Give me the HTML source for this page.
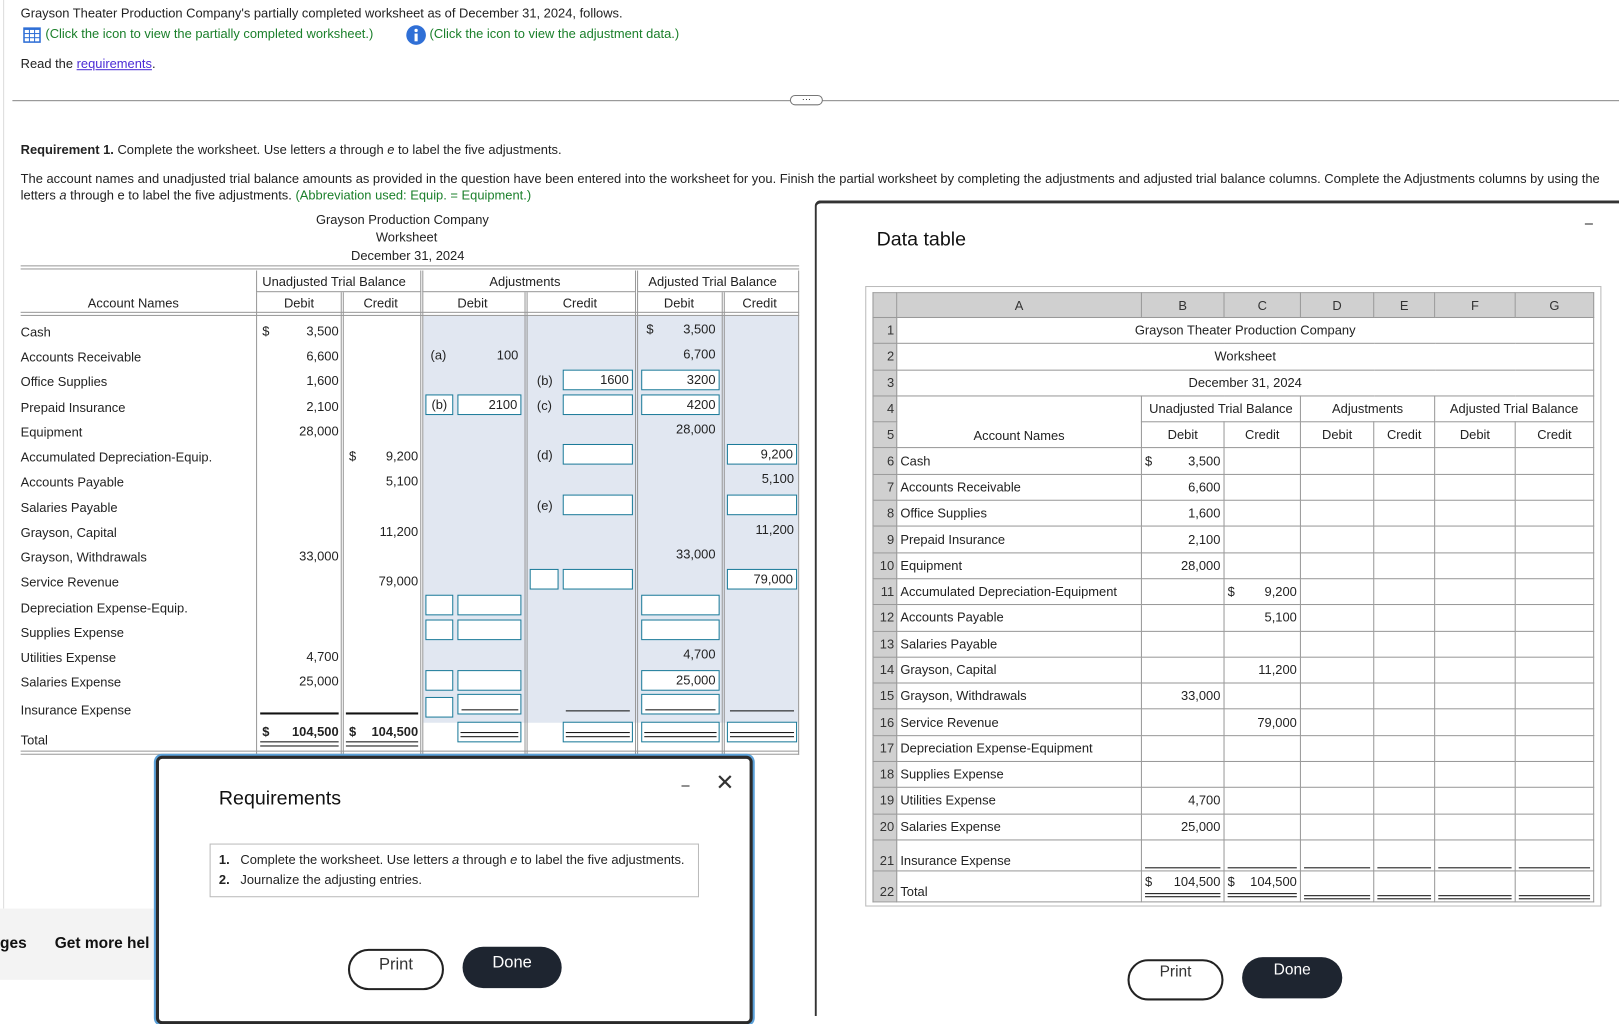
<!DOCTYPE html>
<html><head><meta charset="utf-8"><style>
*{margin:0;padding:0;box-sizing:border-box}
html,body{width:1619px;height:977px;overflow:hidden;background:#fff}
body{font-family:"Liberation Sans",Arial,sans-serif;color:#222;font-size:12.5px}
#w{position:absolute;left:0;top:0;width:1569px;height:947px;transform:scale(1.0325);transform-origin:0 0}
.t{position:absolute;white-space:nowrap;line-height:16px}
.n{position:absolute;white-space:nowrap;text-align:right;line-height:16px}
.b{position:absolute;border:1px solid #1b7a99;background:#fff;height:20px;text-align:right;padding-right:3px;line-height:18px;font-size:12.5px}
.col{position:absolute;top:283px;height:448px;border-left:1px solid #999;border-right:1px solid #999}
.grp{position:absolute;top:262px;height:21px;border-left:1px solid #999;border-right:1px solid #999;border-bottom:1px solid #999}
.sh{position:absolute;background:#e1e7f1}
.ul{position:absolute;height:2px;background:#111}
.dl{position:absolute;height:5px;border-top:1px solid #111;border-bottom:1px solid #111}
.hl{position:absolute;height:4px;border-top:1px solid #999;border-bottom:1px solid #999}
table.dt{position:absolute;left:845px;top:283px;border-collapse:collapse;font-size:12.5px}
.dt td{border:1px solid #999;height:25.3px;padding:0 3px;white-space:nowrap;line-height:14px}
.dt td.rn{background:#d0d0d0;text-align:right;padding:0 2px;width:23px;color:#333}
.dt tr.h td{background:#d0d0d0;text-align:center;height:24px;color:#333}
.c{text-align:center}.r{text-align:right}
.dt td.s{vertical-align:bottom;padding-bottom:2px}
</style></head><body><div id="w">

<div class="t" style="left:20px;top:5px">Grayson Theater Production Company's partially completed worksheet as of December 31, 2024, follows.</div>
<svg style="position:absolute;left:22px;top:26px" width="18" height="16" viewBox="0 0 18 16"><rect x="0.5" y="0.5" width="17" height="15" fill="#2f6fd6"/><g fill="#fff"><rect x="2" y="3" width="4" height="3"/><rect x="7" y="3" width="4" height="3"/><rect x="12" y="3" width="4" height="3"/><rect x="2" y="7" width="4" height="3"/><rect x="7" y="7" width="4" height="3"/><rect x="12" y="7" width="4" height="3"/><rect x="2" y="11" width="4" height="3"/><rect x="7" y="11" width="4" height="3"/><rect x="12" y="11" width="4" height="3"/></g></svg>
<div class="t" style="left:44px;top:25px;color:#1a7f2a">(Click the icon to view the partially completed worksheet.)</div>
<svg style="position:absolute;left:393px;top:24px" width="20" height="20" viewBox="0 0 20 20"><circle cx="10" cy="10" r="9.5" fill="#2f6fd6"/><circle cx="10" cy="5.5" r="1.6" fill="#fff"/><rect x="8.5" y="8.5" width="3" height="7.5" fill="#fff"/></svg>
<div class="t" style="left:416px;top:25px;color:#1a7f2a">(Click the icon to view the adjustment data.)</div>
<div class="t" style="left:20px;top:54px">Read the <span style="color:#4b2bd6;text-decoration:underline">requirements</span>.</div>
<div style="position:absolute;left:0;top:0;width:4px;height:880px;border-right:1px solid #ddd"></div>
<div style="position:absolute;left:12px;top:97px;width:1607px;height:1px;background:#888"></div>
<div style="position:absolute;left:765px;top:92px;width:32px;height:10px;border:1px solid #777;border-radius:5px;background:#fff;font-size:9px;line-height:6px;text-align:center">···</div>

<div class="t" style="left:20px;top:137px"><b>Requirement 1.</b> Complete the worksheet. Use letters <i>a</i> through <i>e</i> to label the five adjustments.</div>
<div class="t" style="left:20px;top:165px">The account names and unadjusted trial balance amounts as provided in the question have been entered into the worksheet for you. Finish the partial worksheet by completing the adjustments and adjusted trial balance columns. Complete the Adjustments columns by using the</div>
<div class="t" style="left:20px;top:181px">letters <i>a</i> through e to label the five adjustments. <span style="color:#1a7f2a">(Abbreviation used: Equip. = Equipment.)</span></div>

<div class="t" style="left:306px;top:205px">Grayson Production Company</div>
<div class="t" style="left:364px;top:222px">Worksheet</div>
<div class="t" style="left:340px;top:240px">December 31, 2024</div>

<div class="sh" style="left:410px;top:306px;width:363px;height:394px"></div>
<div class="grp" style="left:248px;width:160px"></div>
<div class="grp" style="left:409px;width:207px"></div>
<div class="grp" style="left:617px;width:157px"></div>
<div class="col" style="left:248px;width:83px"></div>
<div class="col" style="left:332px;width:76px"></div>
<div class="col" style="left:409px;width:100px"></div>
<div class="col" style="left:510px;width:106px"></div>
<div class="col" style="left:617px;width:83px"></div>
<div class="col" style="left:701px;width:73px"></div>
<div class="hl" style="left:20px;top:257px;width:754px"></div>
<div class="hl" style="left:20px;top:302px;width:754px"></div>
<div class="hl" style="left:20px;top:727px;width:754px"></div>

<div class="t" style="left:254px;top:265px">Unadjusted Trial Balance</div>
<div class="t" style="left:474px;top:265px">Adjustments</div>
<div class="t" style="left:628px;top:265px">Adjusted Trial Balance</div>
<div class="t" style="left:85px;top:286px">Account Names</div>
<div class="t" style="left:275px;top:286px">Debit</div>
<div class="t" style="left:352px;top:286px">Credit</div>
<div class="t" style="left:443px;top:286px">Debit</div>
<div class="t" style="left:545px;top:286px">Credit</div>
<div class="t" style="left:643px;top:286px">Debit</div>
<div class="t" style="left:719px;top:286px">Credit</div>

<div class="t" style="left:20px;top:314px">Cash</div>
<div class="t" style="left:20px;top:338px">Accounts Receivable</div>
<div class="t" style="left:20px;top:362px">Office Supplies</div>
<div class="t" style="left:20px;top:387px">Prepaid Insurance</div>
<div class="t" style="left:20px;top:411px">Equipment</div>
<div class="t" style="left:20px;top:435px">Accumulated Depreciation-Equip.</div>
<div class="t" style="left:20px;top:459px">Accounts Payable</div>
<div class="t" style="left:20px;top:484px">Salaries Payable</div>
<div class="t" style="left:20px;top:508px">Grayson, Capital</div>
<div class="t" style="left:20px;top:532px">Grayson, Withdrawals</div>
<div class="t" style="left:20px;top:556px">Service Revenue</div>
<div class="t" style="left:20px;top:581px">Depreciation Expense-Equip.</div>
<div class="t" style="left:20px;top:605px">Supplies Expense</div>
<div class="t" style="left:20px;top:629px">Utilities Expense</div>
<div class="t" style="left:20px;top:653px">Salaries Expense</div>
<div class="t" style="left:20px;top:680px">Insurance Expense</div>
<div class="t" style="left:20px;top:709px">Total</div>

<div class="t" style="left:254px;top:313px">$</div>
<div class="n" style="left:250px;width:78px;top:313px">3,500</div>
<div class="n" style="left:250px;width:78px;top:337px">6,600</div>
<div class="n" style="left:250px;width:78px;top:361px">1,600</div>
<div class="n" style="left:250px;width:78px;top:386px">2,100</div>
<div class="n" style="left:250px;width:78px;top:410px">28,000</div>
<div class="n" style="left:250px;width:78px;top:531px">33,000</div>
<div class="n" style="left:250px;width:78px;top:628px">4,700</div>
<div class="n" style="left:250px;width:78px;top:652px">25,000</div>
<div class="t" style="left:338px;top:434px">$</div>
<div class="n" style="left:334px;width:71px;top:434px">9,200</div>
<div class="n" style="left:334px;width:71px;top:458px">5,100</div>
<div class="n" style="left:334px;width:71px;top:507px">11,200</div>
<div class="n" style="left:334px;width:71px;top:555px">79,000</div>
<div class="ul" style="left:252px;top:690px;width:76px"></div>
<div class="ul" style="left:335px;top:690px;width:70px"></div>
<div class="t" style="left:254px;top:701px;font-weight:bold">$</div>
<div class="n" style="left:250px;width:78px;top:701px;font-weight:bold">104,500</div>
<div class="t" style="left:338px;top:701px;font-weight:bold">$</div>
<div class="n" style="left:334px;width:71px;top:701px;font-weight:bold">104,500</div>
<div class="dl" style="left:252px;top:718px;width:76px"></div>
<div class="dl" style="left:335px;top:718px;width:70px"></div>

<div class="t" style="left:417px;top:336px">(a)</div>
<div class="n" style="left:440px;width:62px;top:336px">100</div>
<div class="t" style="left:520px;top:361px">(b)</div>
<div class="b" style="left:545px;top:358px;width:68px">1600</div>
<div class="b" style="left:621px;top:358px;width:76px">3200</div>
<div class="b" style="left:412px;top:382px;width:27px;text-align:center;padding:0">(b)</div>
<div class="b" style="left:443px;top:382px;width:62px">2100</div>
<div class="t" style="left:520px;top:385px">(c)</div>
<div class="b" style="left:545px;top:382px;width:68px"></div>
<div class="b" style="left:621px;top:382px;width:76px">4200</div>
<div class="t" style="left:626px;top:311px">$</div>
<div class="n" style="left:620px;width:73px;top:311px">3,500</div>
<div class="n" style="left:620px;width:73px;top:335px">6,700</div>
<div class="n" style="left:620px;width:73px;top:408px">28,000</div>
<div class="t" style="left:520px;top:433px">(d)</div>
<div class="b" style="left:545px;top:430px;width:68px"></div>
<div class="b" style="left:704px;top:430px;width:68px">9,200</div>
<div class="n" style="left:704px;width:65px;top:456px">5,100</div>
<div class="t" style="left:520px;top:482px">(e)</div>
<div class="b" style="left:545px;top:479px;width:68px"></div>
<div class="b" style="left:704px;top:479px;width:68px"></div>
<div class="n" style="left:704px;width:65px;top:505px">11,200</div>
<div class="n" style="left:620px;width:73px;top:529px">33,000</div>
<div class="b" style="left:513px;top:551px;width:28px"></div>
<div class="b" style="left:545px;top:551px;width:68px"></div>
<div class="b" style="left:704px;top:551px;width:68px">79,000</div>
<div class="b" style="left:412px;top:576px;width:27px"></div>
<div class="b" style="left:443px;top:576px;width:62px"></div>
<div class="b" style="left:621px;top:576px;width:76px"></div>
<div class="b" style="left:412px;top:600px;width:27px"></div>
<div class="b" style="left:443px;top:600px;width:62px"></div>
<div class="b" style="left:621px;top:600px;width:76px"></div>
<div class="n" style="left:620px;width:73px;top:626px">4,700</div>
<div class="b" style="left:412px;top:649px;width:27px"></div>
<div class="b" style="left:443px;top:649px;width:62px"></div>
<div class="b" style="left:621px;top:649px;width:76px">25,000</div>
<div class="b" style="left:412px;top:675px;width:27px"></div>
<div class="b" style="left:443px;top:672px;width:62px"></div>
<div class="b" style="left:621px;top:672px;width:76px"></div>
<div class="ul" style="left:447px;top:687px;width:55px;height:1px"></div>
<div class="ul" style="left:548px;top:688px;width:62px;height:1px"></div>
<div class="ul" style="left:625px;top:687px;width:68px;height:1px"></div>
<div class="ul" style="left:707px;top:688px;width:62px;height:1px"></div>
<div class="b" style="left:443px;top:699px;width:62px"></div>
<div class="b" style="left:545px;top:699px;width:68px"></div>
<div class="b" style="left:621px;top:699px;width:76px"></div>
<div class="b" style="left:704px;top:699px;width:68px"></div>
<div class="dl" style="left:446px;top:709px;width:56px"></div>
<div class="dl" style="left:548px;top:709px;width:62px"></div>
<div class="dl" style="left:624px;top:709px;width:70px"></div>
<div class="dl" style="left:707px;top:709px;width:62px"></div>

<div style="position:absolute;left:0;top:880px;width:160px;height:69px;background:#f3f3f3"></div>
<div class="t" style="left:0;top:906px;font-size:15px;font-weight:bold;color:#111">ges</div>
<div class="t" style="left:53px;top:906px;font-size:15px;font-weight:bold;color:#111">Get more hel</div>

<div style="position:absolute;left:151px;top:732px;width:578px;height:260px;border:3px solid #2a2a2a;border-radius:6px;background:#fff;box-shadow:0 0 0 2px #5aa0d8"></div>
<div class="t" style="left:212px;top:763px;font-size:19px;line-height:22px;color:#111">Requirements</div>
<div class="t" style="left:660px;top:752px;font-size:14px">–</div>
<div class="t" style="left:693px;top:747px;font-size:22px;line-height:22px;color:#333">✕</div>
<div style="position:absolute;left:203px;top:817px;width:474px;height:52px;border:1px solid #bbb"></div>
<div class="t" style="left:212px;top:825px"><b>1.</b>&nbsp;&nbsp; Complete the worksheet. Use letters <i>a</i> through <i>e</i> to label the five adjustments.</div>
<div class="t" style="left:212px;top:844px"><b>2.</b>&nbsp;&nbsp; Journalize the adjusting entries.</div>
<div style="position:absolute;left:337px;top:919px;width:93px;height:40px;border:2px solid #222;border-radius:20px;text-align:center;line-height:28px;font-size:16px;color:#333">Print</div>
<div style="position:absolute;left:448px;top:917px;width:96px;height:40px;background:#1e2530;border-radius:20px;text-align:center;line-height:32px;font-size:16px;color:#fff">Done</div>

<div style="position:absolute;left:789px;top:194px;width:840px;height:790px;border-top:3px solid #333;border-left:2px solid #333;border-radius:6px 0 0 0;background:#fff"></div>
<div class="t" style="left:849px;top:222px;font-size:19px;line-height:22px;color:#111">Data table</div>
<div class="t" style="left:1535px;top:208px;font-size:14px">–</div>
<div style="position:absolute;left:838px;top:277px;width:713px;height:601px;border:1px solid #bbb"></div>
<table class="dt">
<tr class="h"><td class="rn" style="background:#d0d0d0"></td><td style="width:237px">A</td><td style="width:80px">B</td><td style="width:74px">C</td><td style="width:71px">D</td><td style="width:59px">E</td><td style="width:78px">F</td><td style="width:76px">G</td></tr>
<tr><td class="rn">1</td><td colspan="7" class="c">Grayson Theater Production Company</td></tr>
<tr><td class="rn">2</td><td colspan="7" class="c">Worksheet</td></tr>
<tr><td class="rn">3</td><td colspan="7" class="c">December 31, 2024</td></tr>
<tr><td class="rn">4</td><td rowspan="2" class="c" style="vertical-align:bottom;padding-bottom:4px">Account Names</td><td colspan="2" class="c" style="padding:0">Unadjusted Trial Balance</td><td colspan="2" class="c">Adjustments</td><td colspan="2" class="c">Adjusted Trial Balance</td></tr>
<tr><td class="rn">5</td><td class="c">Debit</td><td class="c">Credit</td><td class="c">Debit</td><td class="c">Credit</td><td class="c">Debit</td><td class="c">Credit</td></tr>
<tr><td class="rn">6</td><td>Cash</td><td class="r"><span style="float:left">$</span>3,500</td><td></td><td></td><td></td><td></td><td></td></tr>
<tr><td class="rn">7</td><td>Accounts Receivable</td><td class="r">6,600</td><td></td><td></td><td></td><td></td><td></td></tr>
<tr><td class="rn">8</td><td>Office Supplies</td><td class="r">1,600</td><td></td><td></td><td></td><td></td><td></td></tr>
<tr><td class="rn">9</td><td>Prepaid Insurance</td><td class="r">2,100</td><td></td><td></td><td></td><td></td><td></td></tr>
<tr><td class="rn">10</td><td>Equipment</td><td class="r">28,000</td><td></td><td></td><td></td><td></td><td></td></tr>
<tr><td class="rn">11</td><td>Accumulated Depreciation-Equipment</td><td></td><td class="r"><span style="float:left">$</span>9,200</td><td></td><td></td><td></td><td></td></tr>
<tr><td class="rn">12</td><td>Accounts Payable</td><td></td><td class="r">5,100</td><td></td><td></td><td></td><td></td></tr>
<tr><td class="rn">13</td><td>Salaries Payable</td><td></td><td></td><td></td><td></td><td></td><td></td></tr>
<tr><td class="rn">14</td><td>Grayson, Capital</td><td></td><td class="r">11,200</td><td></td><td></td><td></td><td></td></tr>
<tr><td class="rn">15</td><td>Grayson, Withdrawals</td><td class="r">33,000</td><td></td><td></td><td></td><td></td><td></td></tr>
<tr><td class="rn">16</td><td>Service Revenue</td><td></td><td class="r">79,000</td><td></td><td></td><td></td><td></td></tr>
<tr><td class="rn">17</td><td>Depreciation Expense-Equipment</td><td></td><td></td><td></td><td></td><td></td><td></td></tr>
<tr><td class="rn">18</td><td>Supplies Expense</td><td></td><td></td><td></td><td></td><td></td><td></td></tr>
<tr><td class="rn">19</td><td>Utilities Expense</td><td class="r">4,700</td><td></td><td></td><td></td><td></td><td></td></tr>
<tr><td class="rn">20</td><td>Salaries Expense</td><td class="r">25,000</td><td></td><td></td><td></td><td></td><td></td></tr>
<tr style="height:30px"><td class="rn s">21</td><td class="s">Insurance Expense</td><td class="s"><div style="border-bottom:1px solid #111;height:6px"></div></td><td class="s"><div style="border-bottom:1px solid #111;height:6px"></div></td><td class="s"><div style="border-bottom:1px solid #111;height:6px"></div></td><td class="s"><div style="border-bottom:1px solid #111;height:6px"></div></td><td class="s"><div style="border-bottom:1px solid #111;height:6px"></div></td><td class="s"><div style="border-bottom:1px solid #111;height:6px"></div></td></tr>
<tr style="height:30px"><td class="rn s">22</td><td class="s">Total</td><td class="r" style="vertical-align:top;padding-top:3px"><span style="float:left">$</span>104,500<div style="border-top:1px solid #111;border-bottom:1px solid #111;height:4px;margin-top:4px"></div></td><td class="r" style="vertical-align:top;padding-top:3px"><span style="float:left">$</span>104,500<div style="border-top:1px solid #111;border-bottom:1px solid #111;height:4px;margin-top:4px"></div></td><td class="s"><div style="border-top:1px solid #111;border-bottom:1px solid #111;height:4px"></div></td><td class="s"><div style="border-top:1px solid #111;border-bottom:1px solid #111;height:4px"></div></td><td class="s"><div style="border-top:1px solid #111;border-bottom:1px solid #111;height:4px"></div></td><td class="s"><div style="border-top:1px solid #111;border-bottom:1px solid #111;height:4px"></div></td></tr>
</table>
<div style="position:absolute;left:1092px;top:929px;width:93px;height:40px;border:2px solid #222;border-radius:20px;text-align:center;line-height:22px;font-size:15px;color:#333">Print</div>
<div style="position:absolute;left:1203px;top:927px;width:97px;height:40px;background:#1e2530;border-radius:20px;text-align:center;line-height:26px;font-size:15px;color:#fff">Done</div>
</div></body></html>
